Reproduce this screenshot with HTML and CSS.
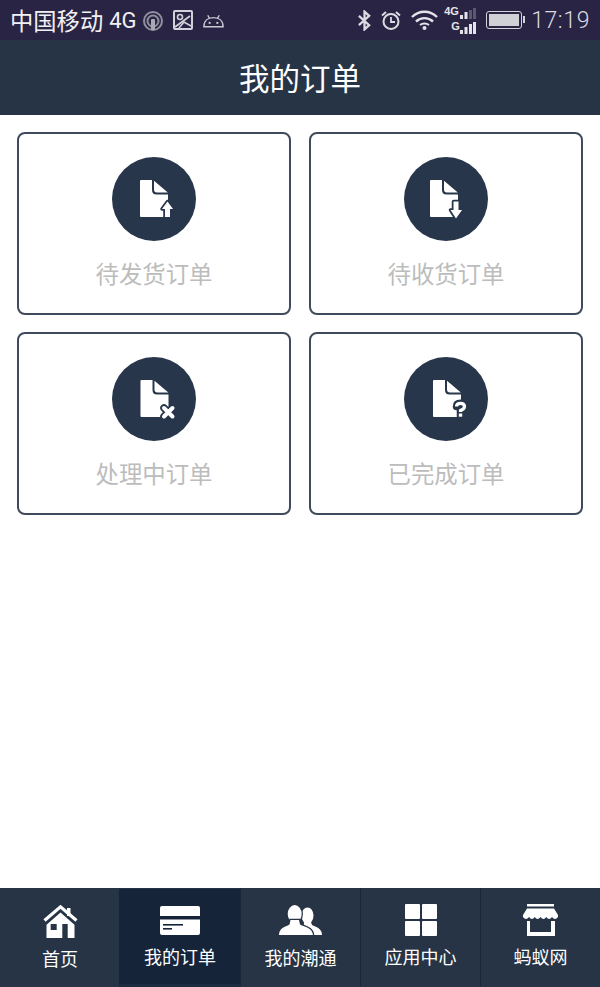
FILE: index.html
```html
<!DOCTYPE html>
<html lang="zh-CN">

<head>
    <meta charset="UTF-8">
    <meta name="viewport" content="width=device-width, initial-scale=1.0">
    <title>我的订单</title>
    <link rel="stylesheet" href="styles.css">
</head>

<body>
    <svg class="icon-defs">
        <defs>
            <g id="doc">
                <path d="M1 0 H12 V10 Q12 14.500 16.500 14.500 H28 V36 Q28 37 27 37 H1 Q0 37 0 36 V1 Q0 0 1 0 Z" fill="#fff"/>
                <path d="M14 0.800 L27.800 12.500 H17 Q14 12.500 14 9.500 Z" fill="#fff"/>
            </g>
        </defs>
    </svg>

    <div class="page">
        <div class="status-bar">
            <div class="status-left">
                <span class="carrier">中国移动</span>
                <span class="net">4G</span>
                <svg class="st st-signal" viewBox="0 0 20 20">
                    <circle cx="10" cy="10" r="9" fill="none" stroke="#8f8f9e" stroke-width="2"/>
                    <circle cx="10" cy="10" r="5.500" fill="none" stroke="#8f8f9e" stroke-width="2"/>
                    <rect x="8" y="8" width="4" height="11" rx="1" fill="#a9a9b5"/>
                </svg>
                <svg class="st st-image" viewBox="0 0 20 20">
                    <rect x="1" y="1" width="18" height="18" rx="1" fill="none" stroke="#d3d2da" stroke-width="2"/>
                    <circle cx="7" cy="7" r="2.500" fill="none" stroke="#d3d2da" stroke-width="1.600"/>
                    <path d="M2 17 L17 6" fill="none" stroke="#d3d2da" stroke-width="1.800"/>
                    <path d="M6 18 L11 12 L18 16" fill="none" stroke="#d3d2da" stroke-width="1.600"/>
                </svg>
                <svg class="st st-android" viewBox="0 0 24 14">
                    <path d="M2 13 C2 7 6 3.500 12 3.500 C18 3.500 22 7 22 13 Z" fill="none" stroke="#c9c8d2" stroke-width="1.500"/>
                    <path d="M6 1 L8 4.500 M18 1 L16 4.500" stroke="#c9c8d2" stroke-width="1.400"/>
                    <circle cx="8" cy="9" r="1.200" fill="#c9c8d2"/>
                    <circle cx="16" cy="9" r="1.200" fill="#c9c8d2"/>
                </svg>
            </div>
            <div class="status-right">
                <svg class="st st-bt" viewBox="0 0 16 22">
                    <path d="M2 6 L13 16 L8 20.500 V1.500 L13 6 L2 16" fill="none" stroke="#dcdbe2" stroke-width="2.400"/>
                </svg>
                <svg class="st st-alarm" viewBox="0 0 20 20">
                    <circle cx="10" cy="11" r="7.500" fill="none" stroke="#dcdbe2" stroke-width="2"/>
                    <path d="M10 6.500 V11.500 H14" fill="none" stroke="#dcdbe2" stroke-width="1.800"/>
                    <path d="M1 5 L5 1.500 M19 5 L15 1.500" stroke="#dcdbe2" stroke-width="2"/>
                </svg>
                <svg class="st st-wifi" viewBox="0 0 27 20">
                    <path d="M1 7 C8 0 19 0 26 7" fill="none" stroke="#e4e3e9" stroke-width="2.400"/>
                    <path d="M5 11.500 C10 7 17 7 22 11.500" fill="none" stroke="#e4e3e9" stroke-width="2.400"/>
                    <path d="M9 15 C11.500 13 15.500 13 18 15" fill="none" stroke="#e4e3e9" stroke-width="2"/>
                    <circle cx="13.500" cy="18" r="2" fill="#e4e3e9"/>
                </svg>
                <div class="st-cell">
                    <span class="cell-4g">4G</span>
                    <span class="cell-g">G</span>
                    <svg class="cell-bars" viewBox="0 0 16 26">
                        <rect x="0" y="7" width="3" height="4" fill="#e4e3e9"/>
                        <rect x="4.500" y="4" width="3" height="7" fill="#e4e3e9"/>
                        <rect x="9" y="2" width="3" height="9" fill="#5b5870"/>
                        <rect x="13" y="0" width="3" height="11" fill="#5b5870"/>
                        <rect x="0" y="22" width="3" height="4" fill="#e4e3e9"/>
                        <rect x="4.500" y="19" width="3" height="7" fill="#e4e3e9"/>
                        <rect x="9" y="16" width="3" height="10" fill="#e4e3e9"/>
                        <rect x="13" y="14" width="3" height="12" fill="#e4e3e9"/>
                    </svg>
                </div>
                <div class="battery"><div class="battery-fill"></div></div>
                <span class="clock">17:19</span>
            </div>
        </div>

        <header class="top-bar">我的订单</header>

        <main class="orders">
            <a class="order-card">
                <svg class="order-icon" viewBox="0 0 84 84">
                    <circle cx="42" cy="42" r="42" fill="#27364a"/>
                    <g transform="translate(28 23)">
                        <use href="#doc"/>
                        <path class="badge" d="M27.500 21.500 L33 29 H30 V37 H25 V29 H22 Z"/>
                    </g>
                </svg>
                <span class="order-label">待发货订单</span>
            </a>
            <a class="order-card">
                <svg class="order-icon" viewBox="0 0 84 84">
                    <circle cx="42" cy="42" r="42" fill="#27364a"/>
                    <g transform="translate(26 23)">
                        <use href="#doc"/>
                        <path class="badge" d="M23.500 21.500 H28.500 V30 H32 L26 38.500 L20.500 30 H23.500 Z"/>
                    </g>
                </svg>
                <span class="order-label">待收货订单</span>
            </a>
            <a class="order-card">
                <svg class="order-icon" viewBox="0 0 84 84">
                    <circle cx="42" cy="42" r="42" fill="#27364a"/>
                    <g transform="translate(28.500 23)">
                        <use href="#doc"/>
                        <path class="badge-under" d="M23.500 28 L32 36.500 M32 28 L23.500 36.500"/>
                        <path class="badge-line" d="M23.500 28 L32 36.500 M32 28 L23.500 36.500"/>
                    </g>
                </svg>
                <span class="order-label">处理中订单</span>
            </a>
            <a class="order-card">
                <svg class="order-icon" viewBox="0 0 84 84">
                    <circle cx="42" cy="42" r="42" fill="#27364a"/>
                    <g transform="translate(29 23)">
                        <use href="#doc"/>
                        <path class="badge-under" d="M23.500 26.500 Q23.500 23.300 27.500 23.300 Q31.500 23.300 31.500 26.500 Q31.500 29 27.500 30.500 V36.500"/>
                        <path class="badge-line badge-q" d="M23.500 26.500 Q23.500 23.300 27.500 23.300 Q31.500 23.300 31.500 26.500 Q31.500 29 27.500 30.500 V32"/>
                        <rect x="25.800" y="33.500" width="3.400" height="3.200" fill="#fff"/>
                    </g>
                </svg>
                <span class="order-label">已完成订单</span>
            </a>
        </main>

        <nav class="tab-bar">
            <a class="tab">
                <svg class="tab-icon" width="35" height="34" viewBox="0 0 35 34">
                    <rect x="24" y="4" width="3.500" height="8" fill="#fff"/>
                    <path d="M1.500 16.500 L17.500 2.800 L33.500 16.500" fill="none" stroke="#fff" stroke-width="3.200"/>
                    <path d="M17.500 8.500 L31.500 20.700 V34 H24.700 V20 H19.300 V34 H3.500 V20.700 Z M7.700 20 V26 H13.700 V20 Z" fill="#fff" fill-rule="evenodd"/>
                </svg>
                <span class="tab-label">首页</span>
            </a>
            <a class="tab tab-active">
                <svg class="tab-icon" width="40" height="29" viewBox="0 0 40 29">
                    <path d="M2 0 H38 Q40 0 40 2 V10 H0 V2 Q0 0 2 0 Z" fill="#fff"/>
                    <path d="M0 13.500 H40 V27 Q40 29 38 29 H2 Q0 29 0 27 Z" fill="#fff"/>
                    <rect x="3" y="18" width="20" height="1.600" fill="#16243a"/>
                    <rect x="3" y="22" width="9" height="1.600" fill="#16243a"/>
                </svg>
                <span class="tab-label">我的订单</span>
            </a>
            <a class="tab">
                <svg class="tab-icon" width="43" height="32" viewBox="0 0 43 32">
                    <ellipse cx="28.500" cy="11.500" rx="6" ry="8" fill="#fff"/>
                    <path d="M25 18 H32 L33 21 C37 23 43 24.500 43 31 H24 Z" fill="#fff"/>
                    <g class="people-front">
                        <ellipse cx="15.700" cy="10" rx="7" ry="9"/>
                        <path d="M11.500 16 H20 L21 20.500 C26 23 33.500 24 34 31 H0 C0 24 6 23 10.500 20.500 Z"/>
                    </g>
                </svg>
                <span class="tab-label">我的潮通</span>
            </a>
            <a class="tab">
                <svg class="tab-icon" width="32" height="32" viewBox="0 0 32 32">
                    <rect x="0" y="0" width="15" height="15" rx="1" fill="#fff"/>
                    <rect x="17" y="0" width="15" height="15" rx="1" fill="#fff"/>
                    <rect x="0" y="17" width="15" height="15" rx="1" fill="#fff"/>
                    <rect x="17" y="17" width="15" height="15" rx="1" fill="#fff"/>
                </svg>
                <span class="tab-label">应用中心</span>
            </a>
            <a class="tab">
                <svg class="tab-icon" width="35" height="32" viewBox="0 0 35 32">
                    <rect x="4" y="0" width="27" height="2.500" fill="#fff"/>
                    <path d="M4 4.500 H31 L35 11 V13 Q32 17 29 13 Q26 17 23.300 13 Q20.500 17 17.500 13 Q14.500 17 11.700 13 Q9 17 6 13 Q3 17 0 13 V11 Z" fill="#fff"/>
                    <path d="M4 17 H7 V28 H28 V17 H32 V32 H4 Z" fill="#fff"/>
                </svg>
                <span class="tab-label">蚂蚁网</span>
            </a>
        </nav>
    </div>
</body>

</html>
```

FILE: styles.css
```css
body {
    margin: 0;
    font-family: 'Noto Sans CJK SC', 'Noto Sans', sans-serif;
    background-color: #fff;
}

.icon-defs {
    display: none;
}

.page {
    display: flex;
    flex-direction: column;
    height: 987px;
    overflow: hidden;
}

/* status bar */
.status-bar {
    display: flex;
    justify-content: space-between;
    align-items: center;
    flex: 0 0 40px;
    background-color: #2a2444;
    color: #f1f0f4;
    padding: 0 10px 0 10px;
}

.status-left,
.status-right {
    display: flex;
    align-items: center;
}

.carrier {
    font-size: 23.300px;
    line-height: 40px;
}

.net {
    font-family: Roboto, sans-serif;
    font-size: 22px;
    margin-left: 6px;
}

.st {
    display: block;
    flex: none;
}

.st-signal {
    width: 20px;
    height: 20px;
    margin: 2px 0 0 6px;
}

.st-image {
    width: 20px;
    height: 20px;
    margin: 0 0 0 10px;
}

.st-android {
    width: 23px;
    height: 14px;
    margin: 2px 0 0 9px;
}

.st-bt {
    width: 15px;
    height: 21px;
}

.st-alarm {
    width: 20px;
    height: 21px;
    margin-left: 9px;
}

.st-wifi {
    width: 27px;
    height: 20px;
    margin-left: 10px;
}

.st-cell {
    position: relative;
    width: 32px;
    height: 28px;
    margin-left: 6px;
}

.cell-4g,
.cell-g {
    position: absolute;
    font-family: 'Liberation Sans', sans-serif;
    font-size: 11px;
    font-weight: 700;
    line-height: 10px;
    color: #e4e3e9;
}

.cell-4g {
    left: 0;
    top: 0;
}

.cell-g {
    left: 7px;
    top: 15px;
}

.cell-bars {
    position: absolute;
    right: 0;
    top: 2px;
    width: 16px;
    height: 26px;
}

.battery {
    position: relative;
    box-sizing: border-box;
    width: 36px;
    height: 18px;
    margin-left: 10px;
    padding: 2px;
    border: 1.5px solid #d4d3da;
    border-radius: 3px;
}

.battery::after {
    content: "";
    position: absolute;
    right: -4px;
    top: 4px;
    width: 2px;
    height: 7px;
    background-color: #d4d3da;
}

.battery-fill {
    height: 100%;
    background-color: #cfcfd6;
}

.clock {
    font-family: Roboto, sans-serif;
    font-weight: 300;
    font-size: 23px;
    letter-spacing: 0.6px;
    margin-left: 9px;
    color: #dcdbe2;
}

/* header */
.top-bar {
    flex: 0 0 75px;
    background-color: #263446;
    color: #fff;
    font-size: 30.500px;
    line-height: 75px;
    text-align: center;
}

/* order cards */
.orders {
    flex: 1;
    display: grid;
    grid-template-columns: 274px 274px;
    grid-auto-rows: 183px;
    gap: 17px 18px;
    align-content: start;
    padding: 17px;
}

.order-card {
    display: flex;
    flex-direction: column;
    align-items: center;
    border: 2px solid #3f4a5c;
    border-radius: 8px;
    padding-top: 23px;
}

.order-icon {
    display: block;
    width: 84px;
    height: 84px;
}

.order-label {
    margin-top: 14px;
    font-size: 23.400px;
    line-height: 36px;
    color: #bcbcbc;
}

/* icon badges over the document */
.badge {
    fill: #fff;
    stroke: #27364a;
    stroke-width: 3.500px;
    stroke-linejoin: round;
    paint-order: stroke;
}

.badge-under {
    fill: none;
    stroke: #27364a;
    stroke-width: 7.500px;
    stroke-linecap: round;
}

.badge-line {
    fill: none;
    stroke: #fff;
    stroke-width: 4px;
    stroke-linecap: round;
}

.badge-q {
    stroke-width: 3.200px;
    stroke-linecap: butt;
}

/* bottom tabs */
.tab-bar {
    display: flex;
    flex: 0 0 98px;
    background-color: #263446;
}

.tab {
    flex: 0 0 120px;
    box-sizing: border-box;
    display: flex;
    flex-direction: column;
    align-items: center;
    height: 98px;
    color: #fff;
    border-left: 1px solid #1a2738;
}

.tab:first-child {
    border-left: none;
}

.tab-active {
    flex-basis: 122px;
    background-color: #16243a;
    border-left: none;
    border-bottom: 3px solid #1d2c40;
    margin: 1px -1px 0 -1px;
}

.tab-icon {
    display: block;
    margin-top: 16px;
}

.tab-active .tab-icon {
    margin-top: 17px;
}

.tab-label {
    font-size: 18px;
    line-height: 26px;
    margin-top: 7px;
}

.tab-active .tab-label {
    margin-top: 8px;
}

.tab:nth-child(3) .tab-label {
    margin-top: 8px;
}

.people-front {
    fill: #fff;
    stroke: #263446;
    stroke-width: 2.500px;
    paint-order: stroke;
}
```
